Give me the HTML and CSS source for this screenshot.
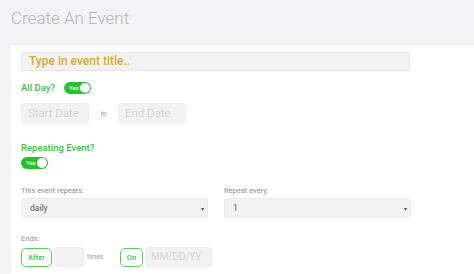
FILE: index.html
```html
<!DOCTYPE html>
<html>
<head>
<meta charset="utf-8">
<link rel="stylesheet" href="styles.css">
</head>
<body>
<h1 class="page-title">Create An Event</h1>
<div class="card">
  <div class="title-input">Type in event title..</div>

  <div class="inline-row allday">
    <span class="green-label">All Day?</span>
    <span class="toggle"><span class="toggle-text">Yes</span><span class="knob"></span></span>
  </div>

  <div class="date-row">
    <div class="field date">Start Date</div>
    <span class="to">to</span>
    <div class="field date">End Date</div>
  </div>

  <div class="green-label repeating">Repeating Event?</div>
  <div class="toggle-wrap"><span class="toggle"><span class="toggle-text">Yes</span><span class="knob"></span></span></div>

  <div class="select-grid">
    <div class="select-col">
      <div class="small-label">This event repeats:</div>
      <div class="select"><span>daily</span><span class="caret">&#9662;</span></div>
    </div>
    <div class="select-col">
      <div class="small-label">Repeat every:</div>
      <div class="select"><span>1</span><span class="caret">&#9662;</span></div>
    </div>
  </div>

  <div class="small-label ends">Ends:</div>
  <div class="ends-row">
    <span class="outline-btn after">After</span>
    <div class="field times-input"></div>
    <span class="times">times</span>
    <span class="outline-btn on">On</span>
    <div class="field mmdd">MM/DD/YY</div>
  </div>
</div>
</body>
</html>
```

FILE: styles.css
```css
html, body {
  margin: 0;
  padding: 0;
}
body {
  background: #f3f3f5;
  font-family: Roboto, "Liberation Sans", sans-serif;
  width: 474px;
  height: 274px;
  overflow: hidden;
}
.page-title {
  margin: 0;
  padding: 5px 11px 0 11px;
  height: 39px;
  box-sizing: border-box;
  font-weight: 300;
  font-size: 17px;
  color: #b4b4b8;
  line-height: 26px;
}
.card {
  margin-left: 11px;
  margin-top: 5px;
  background: #fff;
  border-top: 1px solid #ebebee;
  padding: 7px 10px 10px 10px;
}
.title-input {
  width: 389px;
  height: 19px;
  box-sizing: border-box;
  background: #f2f2f4;
  border: 1px solid #e5e5e8;
  border-radius: 2px;
  padding-left: 7px;
  font-size: 12px;
  font-weight: 500;
  color: #d9a928;
  line-height: 17px;
}
.inline-row {
  display: flex;
  align-items: center;
}
.allday {
  margin-top: 11px;
  gap: 9px;
}
.green-label {
  color: #3dbd40;
  font-size: 9.5px;
  font-weight: 500;
  line-height: 12px;
}
.toggle-wrap {
  display: flex;
  height: 12px;
}
.toggle {
  display: inline-flex;
  align-items: center;
  justify-content: space-between;
  width: 27px;
  height: 12px;
  box-sizing: border-box;
  background: #26c22c;
  border-radius: 6px;
  padding: 0 1px 0 5px;
}
.toggle-text {
  color: #fff;
  font-size: 6px;
  line-height: 12px;
}
.knob {
  width: 10px;
  height: 10px;
  background: #fff;
  border-radius: 50%;
}
.date-row {
  display: flex;
  align-items: center;
  margin-top: 9px;
}
.field {
  background: #f2f2f4;
  border: 1px solid #ececef;
  border-radius: 3px;
  box-sizing: border-box;
  color: #c8c8cc;
  font-size: 11.5px;
  font-weight: 300;
  line-height: 18px;
}
.date {
  width: 68px;
  height: 20px;
  padding-left: 6px;
}
.to {
  font-size: 7px;
  color: #9a9a9e;
  width: 29px;
  text-align: center;
  padding-top: 2px;
}
.repeating {
  margin-top: 19px;
  margin-bottom: 3px;
  display: block;
}
.select-grid {
  display: grid;
  grid-template-columns: 187px 187px;
  column-gap: 16px;
  margin-top: 17px;
}
.small-label {
  font-size: 7.5px;
  color: #8f8f93;
  line-height: 10px;
}
.select {
  margin-top: 2px;
  height: 20px;
  box-sizing: border-box;
  background: #f2f2f4;
  border: 1px solid #ececef;
  border-radius: 3px;
  display: flex;
  align-items: center;
  justify-content: space-between;
  padding: 0 3px 0 8px;
  font-size: 8.5px;
  color: #555558;
}
.caret {
  font-size: 6px;
  color: #555;
}
.ends {
  margin-top: 16px;
}
.ends-row {
  display: flex;
  align-items: center;
  margin-top: 3px;
}
.outline-btn {
  display: inline-flex;
  align-items: center;
  justify-content: center;
  height: 19px;
  box-sizing: border-box;
  border: 1.5px solid #5ad25a;
  border-radius: 5px;
  color: #3fc43f;
  font-size: 7.5px;
  font-weight: 500;
}
.after {
  width: 31px;
}
.times-input {
  width: 30px;
  height: 20px;
  margin-left: 2px;
}
.times {
  font-size: 6.5px;
  color: #9a9a9e;
  margin-left: 3px;
  width: 33px;
}
.on {
  width: 23px;
}
.mmdd {
  width: 67px;
  height: 20px;
  margin-left: 2px;
  padding-left: 5px;
  font-size: 10px;
}
```
